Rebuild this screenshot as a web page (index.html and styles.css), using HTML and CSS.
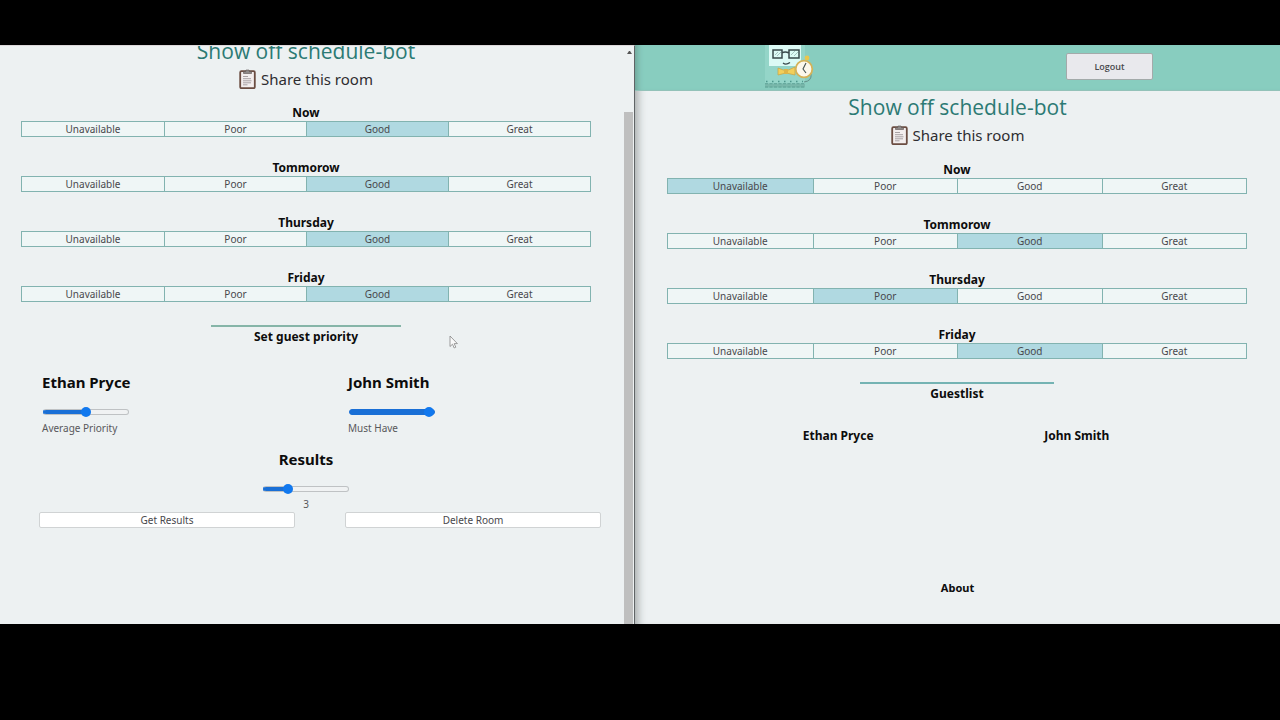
FILE: index.html
```
<!DOCTYPE html>
<html lang="en">
<head>
<meta charset="utf-8">
<title>schedule-bot</title>
<link rel="stylesheet" href="styles.css">
</head>
<body>
<svg class="defs" aria-hidden="true">
  <symbol id="clipboard" viewBox="0 0 17 20">
    <rect x="1.2" y="2.2" width="14.6" height="17" rx="1.2" fill="#f3eeee" stroke="#6b4d42" stroke-width="1.8"/>
    <path d="M4.5 4.5V2.6H6.6L7 1H10L10.4 2.6H12.5V4.5Z" fill="#8f8a88" stroke="#5c5351" stroke-width=".6"/>
    <path d="M4 7.5H9M4 9.7H12M4 11.8H12.5M4 13.8H12M4 15.8H8.5" stroke="#a9a2a4" stroke-width="1"/>
  </symbol>
</svg>
<div class="desktop">
  <section class="window host">
    <div class="page scrolled">
      <h1 class="title">Show off schedule-bot</h1>
      <p class="share"><svg class="clip"><use href="#clipboard"/></svg>Share this room</p>
      <div class="days">
        <h2 class="day">Now</h2>
        <div class="options"><button>Unavailable</button><button>Poor</button><button class="on">Good</button><button>Great</button></div>
        <h2 class="day">Tommorow</h2>
        <div class="options"><button>Unavailable</button><button>Poor</button><button class="on">Good</button><button>Great</button></div>
        <h2 class="day">Thursday</h2>
        <div class="options"><button>Unavailable</button><button>Poor</button><button class="on">Good</button><button>Great</button></div>
        <h2 class="day">Friday</h2>
        <div class="options"><button>Unavailable</button><button>Poor</button><button class="on">Good</button><button>Great</button></div>
        <h2 class="section green">Set guest priority</h2>
      </div>
      <div class="guests">
        <div class="guest">
          <h3 class="name"><label for="ethan">Ethan Pryce</label></h3>
          <input class="slider half" id="ethan" type="range" min="0" max="10" value="5">
          <p class="note">Average Priority</p>
        </div>
        <div class="guest">
          <h3 class="name"><label for="john">John Smith</label></h3>
          <input class="slider full" id="john" type="range" min="0" max="10" value="10">
          <p class="note">Must Have</p>
        </div>
      </div>
      <div class="results">
        <h3 class="name"><label for="count">Results</label></h3>
        <input class="slider quarter" id="count" type="range" min="1" max="9" value="3">
        <p class="note">3</p>
      </div>
      <div class="actions">
        <button class="action">Get Results</button>
        <button class="action">Delete Room</button>
      </div>
      <svg class="pointer" viewBox="0 0 9 14" aria-hidden="true"><path d="M1 1V11.5L3.5 9.2L5.2 13L6.8 12.2L5.2 8.6H8.4Z" fill="#fafafa" stroke="#858585" stroke-width=".8"/></svg>
    </div>
    <div class="scrollbar"><span class="arrow"></span><span class="thumb"></span></div>
  </section>
  <section class="window visitor">
    <header class="bar">
      <svg class="logo" viewBox="0 0 50 44" role="img" aria-label="schedule-bot">
        <path d="M1 0H41V41H1Z" fill="#94d5c8"/>
        <path d="M5 0H37V21H5Z" fill="#dcfaf5"/>
        <path d="M9 5H18V13H9ZM25 5H35V13H25ZM18 8Q21 6 25 8" fill="none" stroke="#38494b" stroke-width="1.5"/>
        <path d="M11 10L14 7M13 11L17 7M27 10L31 6M30 11L34 7" stroke="#8caaa8" stroke-width=".7"/>
        <path d="M19 18Q22 20.5 26 17.5" fill="none" stroke="#38494b" stroke-width="1.3"/>
        <path d="M14 23L22 26L31 22V30L22 28L14 30Z" fill="#f2cf5b" stroke="#c5a345" stroke-width=".7"/>
        <path d="M20 24H24V29H20Z" fill="#dfb548"/>
        <circle cx="43" cy="13" r="2.4" fill="#e9c64d"/>
        <path d="M47 29Q48 36 40 37" fill="none" stroke="#638f89"/>
        <circle cx="40" cy="24" r="8.3" fill="#fcf8ec" stroke="#d5b258" stroke-width="1.8"/>
        <path d="M42 18L39 24L42 28" fill="none" stroke="#45514f" stroke-width="1.1"/>
        <path d="M2 36.5H39" stroke="#4d978c" stroke-width="1.3" stroke-dasharray="1.5 4.5"/>
        <path d="M1 38.5H41V42.5H1Z" fill="#79b8ab"/>
        <path d="M1 38.7H41M1 42H41" stroke="#559c90" stroke-width=".8" stroke-dasharray="3 1.5"/>
      </svg>
      <button class="logout">Logout</button>
    </header>
    <div class="page">
      <h1 class="title">Show off schedule-bot</h1>
      <p class="share"><svg class="clip"><use href="#clipboard"/></svg>Share this room</p>
      <div class="days">
        <h2 class="day">Now</h2>
        <div class="options"><button class="on">Unavailable</button><button>Poor</button><button>Good</button><button>Great</button></div>
        <h2 class="day">Tommorow</h2>
        <div class="options"><button>Unavailable</button><button>Poor</button><button class="on">Good</button><button>Great</button></div>
        <h2 class="day">Thursday</h2>
        <div class="options"><button>Unavailable</button><button class="on">Poor</button><button>Good</button><button>Great</button></div>
        <h2 class="day">Friday</h2>
        <div class="options"><button>Unavailable</button><button>Poor</button><button class="on">Good</button><button>Great</button></div>
        <h2 class="section">Guestlist</h2>
      </div>
      <div class="guestlist"><h4>Ethan Pryce</h4><h4>John Smith</h4></div>
    </div>
    <footer class="footer"><a href="#about">About</a></footer>
  </section>
</div>
</body>
</html>
```
FILE: styles.css
```
* { box-sizing: border-box; }
body {
  margin: 0;
  min-height: 100vh;
  padding: 45px 0 96px;
  display: flex;
  background: #000;
  color: #0c0c0c;
  font-family: "Noto Sans", "Open Sans", sans-serif;
  font-size: 11px;
}
h1, h2, h3, h4, p { margin: 0; }
button { font: inherit; padding: 0; }
.defs { position: absolute; width: 0; height: 0; }
.desktop { flex: 1; display: grid; grid-template-columns: 635fr 645fr; }
.window { min-width: 0; background: #edf1f2; }
.host {
  position: relative;
  z-index: 1;
  display: flex;
  overflow: hidden;
  border-top: 1px solid #dcd8da;
  border-right: 1px solid #606466;
}
.host .page { flex: 1; padding-right: 12px; }
.scrolled { margin-top: -11px; }
.title {
  padding-top: 1px;
  font-family: "Open Sans", "Noto Sans", sans-serif;
  font-size: 21px;
  line-height: 30px;
  font-weight: 400;
  color: #2c7a74;
  text-align: center;
}
.share {
  display: flex;
  justify-content: center;
  align-items: center;
  gap: 5px;
  margin-bottom: 12px;
  font-size: 15px;
  line-height: 26px;
  color: #2d2d30;
}
.visitor .share { margin-bottom: 13px; }
.clip { width: 17px; height: 20px; }
.days { padding: 0 21px; }
.visitor .days { padding: 0 33px 0 32px; }
.day { font-size: 12px; line-height: 17px; text-align: center; }
.options {
  display: grid;
  grid-template-columns: repeat(4, 1fr);
  margin-bottom: 22px;
  border: 1px solid #82b3b0;
}
.options button {
  height: 14px;
  border: 0;
  border-left: 1px solid #82b3b0;
  background: #eff6f6;
  color: #48484c;
  font-size: 10px;
  line-height: 14px;
}
.options button:first-child { border-left: 0; }
.options .on { background: #b0d9e1; }
.section {
  width: 33.4%;
  margin: 23px auto 0;
  padding-top: 1px;
  border-top: 2px solid #74b3b3;
  font-size: 12px;
  line-height: 18px;
  text-align: center;
}
.green { border-color: #86b5a8; }
.guests { display: grid; grid-template-columns: 1fr 1fr; padding-top: 24px; }
.guest { padding-left: 42px; }
.name { font-size: 15px; line-height: 24px; }
.note { color: #58585b; font-size: 10px; line-height: 16px; }
.slider {
  appearance: none;
  display: block;
  width: 86px;
  height: 10px;
  margin: 13px 0 3px 1px;
  background: none;
}
.slider::-webkit-slider-runnable-track {
  height: 6px;
  border: 1px solid #bfc2c4;
  border-radius: 3px;
  background: #f0f2f3;
}
.half::-webkit-slider-runnable-track { background: linear-gradient(to right, #196fd6 50%, #f0f2f3 50%); border-left-color: #196fd6; }
.full::-webkit-slider-runnable-track { background: #196fd6; border-color: #196fd6; }
.quarter::-webkit-slider-runnable-track { background: linear-gradient(to right, #196fd6 27%, #f0f2f3 27%); border-left-color: #196fd6; }
.slider::-webkit-slider-thumb {
  appearance: none;
  width: 10px;
  height: 10px;
  margin-top: -3px;
  border-radius: 50%;
  background: #1178ee;
}
.results { padding-top: 11px; text-align: center; }
.results .slider { margin-left: auto; margin-right: auto; }
.results .note { line-height: 15px; }
.actions { display: grid; grid-template-columns: 1fr 1fr; }
.action {
  height: 16px;
  margin: 0 11px 0 39px;
  border: 1px solid #d0d3d4;
  border-radius: 2px;
  background: #fff;
  color: #48484c;
  font-size: 10px;
  line-height: 14px;
}
.pointer { position: absolute; left: 449px; top: 289px; width: 9px; height: 14px; }
.scrollbar { width: 10px; display: flex; flex-direction: column; }
.arrow {
  align-self: center;
  width: 5px;
  margin: 5px 0 58px;
  border: 2px solid transparent;
  border-top: 0;
  border-bottom: 3px solid #555;
}
.thumb { flex: 1; width: 9px; background: #bfbfbf; }
.visitor {
  display: flex;
  flex-direction: column;
  box-shadow: inset 9px 0 8px -6px #a5aaab;
}
.bar {
  display: flex;
  justify-content: space-between;
  align-items: flex-start;
  height: 46px;
  padding: 0 127px 0 129px;
  background: #88cdbf;
  border-bottom: 1px solid #93c2b9;
  box-shadow: inset 7px 0 6px -5px #6b9d93;
}
.logo { width: 50px; height: 44px; }
.logout {
  width: 87px;
  height: 27px;
  margin-top: 8px;
  border: 1px solid #a3aaaa;
  border-radius: 2px;
  background: #e9e9ed;
  color: #48484c;
  font-family: "Open Sans", "Noto Sans", sans-serif;
  font-size: 9px;
  font-weight: 600;
}
.guestlist {
  display: grid;
  grid-template-columns: 1fr 1fr;
  width: 74%;
  margin: 0 auto;
  padding-top: 24px;
  text-align: center;
  line-height: 18px;
}
.guestlist h4 { font-size: 12px; }
.footer { margin-top: auto; padding-bottom: 28px; text-align: center; line-height: 16px; }
.footer a { color: #0c0c0c; font-size: 11px; font-weight: 700; text-decoration: none; }
```
